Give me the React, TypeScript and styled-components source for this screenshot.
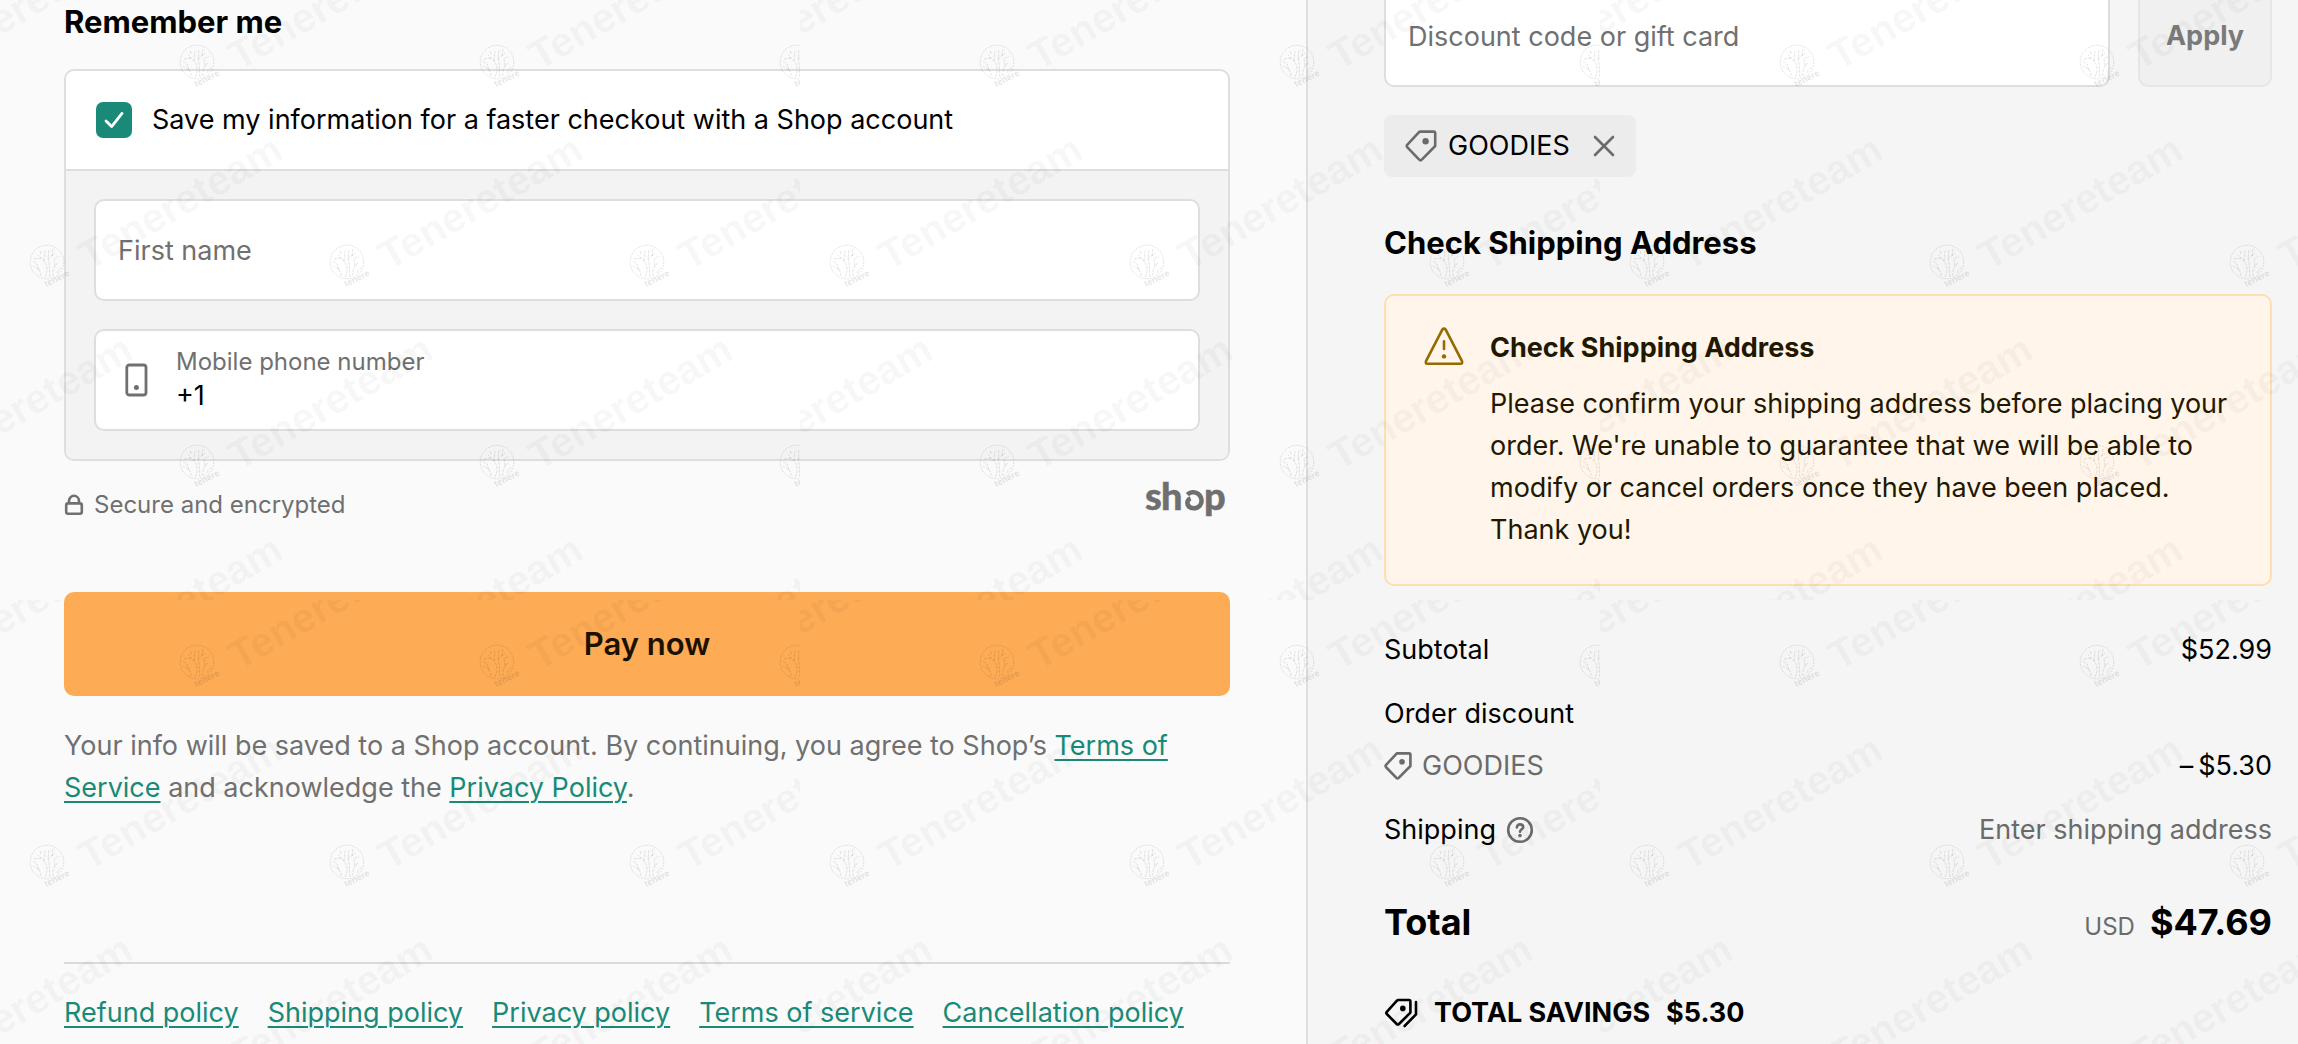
import React from "react";
import styled, { createGlobalStyle } from "styled-components";

const GlobalStyle = createGlobalStyle`
  *, *::before, *::after { box-sizing: border-box; }
  body {
    margin: 0;
    background: #fafafa;
    color: #000;
    font-family: Inter, Roboto, "Liberation Sans", sans-serif;
    font-size: 27px;
    line-height: 42px;
  }
  h2, h3, p, dl, dt, dd, ul { margin: 0; padding: 0; }
  button, input { font: inherit; color: inherit; }
`;

const Page = styled.div`
  position: relative;
  display: grid;
  grid-template-columns: 1308fr 990fr;
  min-height: 100vh;
  overflow: hidden;
`;

const Main = styled.main`
  padding: 0 76px 0 64px;
  border-right: 2px solid #dedede;
  background: #fafafa;
`;

const Aside = styled.aside`
  padding: 0 26px 0 76px;
  background: #f5f5f5;
`;

const SectionTitle = styled.h2<{ $top?: number; $bottom: number }>`
  margin: ${(p) => p.$top ?? 0}px 0 ${(p) => p.$bottom}px;
  font-size: 31px;
  line-height: 44px;
  font-weight: 700;
`;

const Card = styled.section`
  border: 2px solid #dedede;
  border-radius: 10px;
  overflow: hidden;
  background: #fff;
`;

const SaveRow = styled.label`
  display: flex;
  align-items: center;
  gap: 20px;
  padding: 28px 30px;
  border-bottom: 2px solid #dedede;
`;

const Tick = styled.span`
  display: grid;
  margin: 3px 0;

  > * { grid-area: 1 / 1; }
  > svg { place-self: center; pointer-events: none; }
`;

const TickInput = styled.input`
  appearance: none;
  width: 36px;
  height: 36px;
  margin: 0;
  border-radius: 7px;
  background: #188a77;
`;

const CardBody = styled.div`
  display: grid;
  gap: 28px;
  padding: 28px;
  background: #f3f3f3;
`;

const fieldBox = `
  height: 102px;
  border: 2px solid #dedede;
  border-radius: 10px;
  background: #fff;
`;

const TextField = styled.input`
  ${fieldBox}
  width: 100%;
  min-width: 0;
  padding: 0 22px;
  outline: none;
  &::placeholder { color: #707070; opacity: 1; }
`;

const PhoneField = styled.div`
  ${fieldBox}
  display: flex;
  align-items: center;
  gap: 28px;
  padding: 0 29px;
`;

const PhoneText = styled.div`
  display: grid;
  flex: 1;
`;

const FieldLabel = styled.label`
  color: #707070;
  font-size: 24px;
  line-height: 32px;
`;

const BareInput = styled.input`
  padding: 0;
  border: 0;
  outline: none;
  background: none;
  height: 36px;
`;

const SecureRow = styled.div`
  display: flex;
  justify-content: space-between;
  align-items: flex-start;
  margin: 22px 3px 65px 0;
  color: #707070;
  font-size: 24px;
  line-height: 44px;
`;

const Inline = styled.span`
  display: flex;
  align-items: center;
  gap: 10px;
`;

const PayButton = styled.button`
  display: block;
  width: 100%;
  height: 104px;
  border: 0;
  border-radius: 10px;
  background: #fdab54;
  color: #1c1100;
  font-size: 31px;
  font-weight: 600;
`;

const Terms = styled.p`
  margin: 29px 0 153px;
  color: #707070;
`;

const Link = styled.a`
  color: #188a77;
  text-decoration: underline;
  text-decoration-thickness: 2px;
  text-underline-offset: 4px;
`;

const Policies = styled.footer`
  display: flex;
  flex-wrap: wrap;
  gap: 0 29px;
  padding-top: 28px;
  border-top: 2px solid #dadada;
`;

const DiscountForm = styled.form`
  display: flex;
  gap: 28px;
  margin-top: -15px;
`;

const ApplyButton = styled.button`
  height: 102px;
  flex: none;
  padding: 0 26px;
  border: 2px solid #e6e6e6;
  border-radius: 10px;
  background: #f0f0f0;
  color: #7a7a7a;
  font-weight: 700;
`;

const Chip = styled.div`
  display: flex;
  align-items: center;
  width: fit-content;
  height: 62px;
  margin-top: 28px;
  padding: 0 21px;
  border-radius: 8px;
  background: #ececec;
`;

const ChipText = styled.span`
  margin: 0 23px 0 11px;
`;

const IconButton = styled.button`
  display: grid;
  padding: 0;
  border: 0;
  background: none;
`;

const Banner = styled.section`
  display: flex;
  gap: 26px;
  margin-bottom: 43px;
  padding: 31px 34px 33px 38px;
  border: 2px solid #ffdeb0;
  border-radius: 10px;
  background: #fff5ea;
  color: #221800;

  > svg { flex: none; }
`;

const BannerTitle = styled.h3`
  margin-bottom: 14px;
  font-size: 27px;
  line-height: 42px;
  font-weight: 700;
`;

const Costs = styled.dl`
  display: grid;
`;

const CostRow = styled.div<{ $top: number }>`
  display: flex;
  justify-content: space-between;
  align-items: center;
  margin-top: ${(p) => p.$top}px;
`;

const Minus = styled.span`
  margin-right: 5px;
`;

const Muted = styled(Inline)`
  color: #6b6b6b;
`;

const TotalRow = styled.div`
  display: flex;
  justify-content: space-between;
  align-items: baseline;
  margin: 44px 0 43px;
  font-size: 36px;
  line-height: 54px;
  font-weight: 700;
`;

const Currency = styled.span`
  margin-right: 15px;
  color: #6b6b6b;
  font-size: 24px;
  line-height: 24px;
  font-weight: 400;
`;

const Savings = styled.div`
  display: flex;
  align-items: center;
  gap: 16px;
  font-weight: 700;
`;

const WatermarkLayer = styled.svg`
  position: absolute;
  top: 0;
  left: 0;
  z-index: 1;
  pointer-events: none;
  user-select: none;
  font-family: "Liberation Sans", sans-serif;
  font-weight: 700;
`;

const TagIcon = ({ size, weight }: { size: number; weight: number }) => (
  <svg width={size} height={size} viewBox="0 0 32 32" fill="none" stroke="#6b6b6b" strokeWidth={weight} strokeLinejoin="round" aria-hidden="true">
    <path d="M15.4 1.6H28.6Q30.2 1.6 30.2 3.2V16L16.8 29.6Q15.5 30.9 14.2 29.6L2.4 17.4Q1.2 16 2.4 14.6L13.6 2.6Q14.4 1.6 15.4 1.6Z" />
    <circle cx="20.6" cy="11.2" r="3.2" fill="#6b6b6b" stroke="none" />
  </svg>
);

const TagsIcon = () => (
  <svg width="34" height="30" viewBox="0 0 34 30" fill="none" stroke="#000" strokeWidth="2.6" strokeLinejoin="round" strokeLinecap="round" aria-hidden="true">
    <path d="M14.4 2H25Q26.4 2 26.4 3.4V14.6L15 26Q13.8 27 12.7 26L2.8 16Q1.8 14.9 2.8 13.8L12.7 2.8Q13.4 2 14.4 2Z" />
    <circle cx="18.8" cy="10.4" r="2.8" fill="#000" stroke="none" />
    <path d="M32 4V16.4L20.6 28" />
  </svg>
);

const CloseIcon = () => (
  <svg width="22" height="22" viewBox="0 0 22 22" stroke="#6b6b6b" strokeWidth="2.6" strokeLinecap="round" aria-hidden="true">
    <path d="M2 2L20 20M20 2L2 20" />
  </svg>
);

const PhoneIcon = () => (
  <svg width="23" height="34" viewBox="0 0 23 34" fill="none" stroke="#707070" strokeWidth="2.8" aria-hidden="true">
    <rect x="1.8" y="2" width="19.2" height="30" rx="2.6" />
    <circle cx="11.4" cy="24.4" r="2.5" fill="#707070" stroke="none" />
  </svg>
);

const LockIcon = () => (
  <svg width="20" height="22" viewBox="0 0 20 22" fill="none" stroke="#707070" strokeWidth="2.6" aria-hidden="true">
    <rect x="2.2" y="9.4" width="15.6" height="10.4" rx="2" />
    <path d="M5 9.4V7.2A5 5.4 0 0 1 15 7.2V9.4" />
  </svg>
);

const HelpIcon = () => (
  <svg width="28" height="28" viewBox="0 0 28 28" fill="none" stroke="#6b6b6b" strokeWidth="2.6" strokeLinecap="round" aria-hidden="true">
    <circle cx="14" cy="14" r="11.8" />
    <path d="M10.9 11.4C10.9 9.6 12.2 8.4 14 8.4S17.2 9.5 17.2 11.2C17.2 13.2 14 13.4 14 15.8" />
    <circle cx="14" cy="19.6" r="1.8" fill="#6b6b6b" stroke="none" />
  </svg>
);

const WarningIcon = () => (
  <svg width="40" height="40" viewBox="0 0 40 40" fill="none" stroke="#956a00" strokeWidth="2.6" strokeLinejoin="round" strokeLinecap="round" aria-hidden="true">
    <path d="M18.3 2.6Q20 .6 21.7 2.6L38 34.2Q38.8 36.6 36.6 36.8H3.4Q1.2 36.6 2 34.2Z" />
    <path d="M20 14.4V22" />
    <circle cx="20" cy="29.4" r="2.2" fill="#956a00" stroke="none" />
  </svg>
);

const ShopLogo = () => (
  <svg width="81" height="40" viewBox="0 0 81 40" overflow="visible" role="img" aria-label="shop" fill="#6f6f6f" stroke="#6f6f6f">
    <g fontFamily="Lato, sans-serif" fontWeight="900" fontSize="38" strokeWidth="0.4">
      <text x="-1" y="27">s</text>
      <text x="15" y="27">h</text>
      <text x="58" y="27">p</text>
    </g>
    <path d="M41.4 11.6C44 8.8 48.6 8.4 51.8 10.6C56 13.4 56.6 19.6 53.8 22.8C50.8 26.2 44.6 26.2 42.2 22.6C40.4 19.4 41.8 16.4 44.6 15.4" fill="none" strokeWidth="4.6" />
  </svg>
);

const Mark = ({ x, y }: { x: number; y: number }) => (
  <g transform={`translate(${x} ${y})`}>
    <g fill="none" stroke="#000" strokeOpacity="0.11">
      <circle r="16.8" strokeDasharray="2 1" />
      <path
        strokeDasharray="3 1"
        d="M-2 15C1 9 1 4-3-1L-9-7M-3-1L-2-11M-6-4L-13-3M3 15C2 8 3 2 1-3L2-12M1-3L8-9M6 14C5 8 7 4 12 0M8 4L7-3L12-6M-6 14C-6 9-9 6-14 4M-8 8L-10 2L-14-1M-6-8L-7-12M5-6L6-13M10 11C11 8 13 6 15 5"
      />
    </g>
    <text transform="translate(-1 25) rotate(-26)" fontSize="9" fill="#000" fillOpacity="0.12">tenere</text>
    <text transform="translate(42 9) rotate(-30)" fontSize="41" fill="#000" fillOpacity="0.045">Tenereteam</text>
  </g>
);

const TILE_WIDTH = 800;
const TILE_HEIGHT = 600;

const marks = [
  ...[-103, 197, 497, 797].flatMap((x) => [{ x, y: 62 }, { x, y: 462 }]),
  ...[47, 347, 647].flatMap((x) => [{ x, y: 262 }, { x, y: 662 }]),
];

const Tile = ({ x, y }: { x: number; y: number }) => (
  <svg x={x} y={y} width={TILE_WIDTH} height={TILE_HEIGHT} overflow="hidden">
    {marks.map((mark) => (
      <Mark key={`${mark.x}-${mark.y}`} x={mark.x} y={mark.y} />
    ))}
  </svg>
);

const Watermark = () => (
  <WatermarkLayer width={TILE_WIDTH * 3} height={TILE_HEIGHT * 2} aria-hidden="true">
    {[0, 1].map((row) =>
      [0, 1, 2].map((col) => <Tile key={`${row}-${col}`} x={col * TILE_WIDTH} y={row * TILE_HEIGHT} />),
    )}
  </WatermarkLayer>
);

const policies = ["Refund policy", "Shipping policy", "Privacy policy", "Terms of service", "Cancellation policy"];

export default function App() {
  return (
    <>
      <GlobalStyle />
      <Page>
        <Main>
          <SectionTitle $bottom={25}>Remember me</SectionTitle>
          <Card>
            <SaveRow>
              <Tick>
                <TickInput type="checkbox" defaultChecked />
                <svg width="20" height="18" viewBox="0 0 20 18" fill="none" stroke="#fff" strokeWidth="2.8" strokeLinecap="round" strokeLinejoin="round" aria-hidden="true">
                  <path d="M2 10L7.6 15.6L18 2.4" />
                </svg>
              </Tick>
              Save my information for a faster checkout with a Shop account
            </SaveRow>
            <CardBody>
              <TextField type="text" placeholder="First name" aria-label="First name" />
              <PhoneField>
                <PhoneIcon />
                <PhoneText>
                  <FieldLabel htmlFor="phone">Mobile phone number</FieldLabel>
                  <BareInput id="phone" type="tel" defaultValue="+1" />
                </PhoneText>
              </PhoneField>
            </CardBody>
          </Card>
          <SecureRow>
            <Inline>
              <LockIcon />
              Secure and encrypted
            </Inline>
            <ShopLogo />
          </SecureRow>
          <PayButton type="button">Pay now</PayButton>
          <Terms>
            Your info will be saved to a Shop account. By continuing, you agree to Shop’s <Link href="#terms">Terms of Service</Link> and
            acknowledge the <Link href="#privacy">Privacy Policy</Link>.
          </Terms>
          <Policies>
            {policies.map((name) => (
              <Link key={name} href="#policy">{name}</Link>
            ))}
          </Policies>
        </Main>
        <Aside>
          <DiscountForm>
            <TextField type="text" placeholder="Discount code or gift card" aria-label="Discount code or gift card" />
            <ApplyButton type="button" disabled>Apply</ApplyButton>
          </DiscountForm>
          <Chip>
            <TagIcon size={32} weight={2.6} />
            <ChipText>GOODIES</ChipText>
            <IconButton type="button" aria-label="Remove GOODIES">
              <CloseIcon />
            </IconButton>
          </Chip>
          <SectionTitle $top={44} $bottom={29}>Check Shipping Address</SectionTitle>
          <Banner>
            <WarningIcon />
            <div>
              <BannerTitle>Check Shipping Address</BannerTitle>
              <p>
                Please confirm your shipping address before placing your order. We're unable to guarantee that we will be able to modify or
                cancel orders once they have been placed. Thank you!
              </p>
            </div>
          </Banner>
          <Costs>
            <CostRow $top={0}>
              <dt>Subtotal</dt>
              <dd>$52.99</dd>
            </CostRow>
            <CostRow $top={22}>
              <dt>Order discount</dt>
            </CostRow>
            <CostRow $top={10}>
              <dt>
                <Muted>
                  <TagIcon size={28} weight={3} />
                  GOODIES
                </Muted>
              </dt>
              <dd>
                <Minus>–</Minus>$5.30
              </dd>
            </CostRow>
            <CostRow $top={22}>
              <dt>
                <Inline>
                  Shipping
                  <HelpIcon />
                </Inline>
              </dt>
              <dd>
                <Muted>Enter shipping address</Muted>
              </dd>
            </CostRow>
            <TotalRow>
              <dt>Total</dt>
              <dd>
                <Currency>USD</Currency>
                $47.69
              </dd>
            </TotalRow>
          </Costs>
          <Savings>
            <TagsIcon />
            <span>TOTAL SAVINGS</span>
            <span>$5.30</span>
          </Savings>
        </Aside>
        <Watermark />
      </Page>
    </>
  );
}
